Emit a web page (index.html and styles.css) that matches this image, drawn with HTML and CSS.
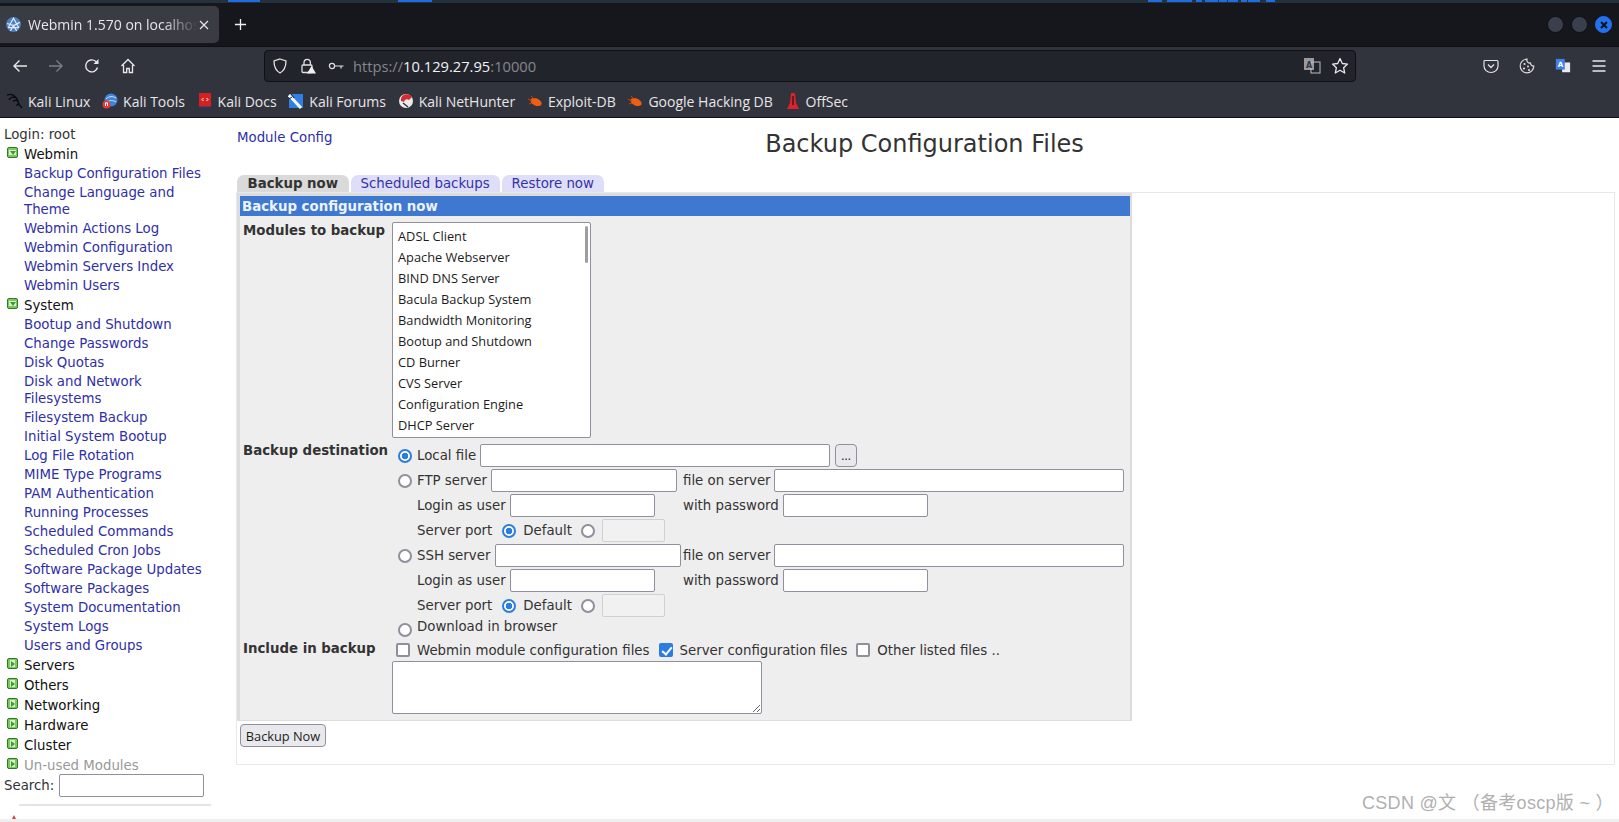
FILE: index.html
```html
<!DOCTYPE html>
<html lang="en">
<head>
<meta charset="utf-8">
<title>Webmin 1.570 on localhost</title>
<link rel="stylesheet" href="styles.css">
</head>
<body>
<div class="browser">
  <div class="loadstrip"><i class="b1"></i><i class="b2"></i><i class="b3"></i></div>
  <div class="tabbar">
    <div class="tab">
      <svg class="favicon" viewBox="0 0 16 16"><circle cx="8" cy="8" r="7" fill="#4a7fc4"/><path d="M3 11 8 2l5 9M2 7l6 2 6-3M5 14l3-5 3 5M3 11h10" fill="none" stroke="#e4ecf6" stroke-width="1.1"/></svg>
      <span class="tab-title">Webmin 1.570 on localhost</span>
      <svg class="tab-close" viewBox="0 0 12 12"><path d="M2 2l8 8M10 2l-8 8" stroke="#e6e6e8" stroke-width="1.2"/></svg>
    </div>
    <svg class="newtab" viewBox="0 0 14 14"><path d="M7 1v12M1 7h12" stroke="#f0f0f2" stroke-width="1.4"/></svg>
    <div class="winbtns"><i class="wb"></i><i class="wb"></i><i class="wb close"><svg viewBox="0 0 10 10"><path d="M2 2l6 6M8 2l-6 6" stroke="#10131a" stroke-width="2"/></svg></i></div>
  </div>
  <div class="navbar">
    <svg class="nav-ic" viewBox="0 0 16 16"><path d="M15 8H2M7.500 2.500 2 8l5.500 5.500" fill="none" stroke="#e8e8ea" stroke-width="1.400"/></svg>
    <svg class="nav-ic" viewBox="0 0 16 16"><path d="M1 8h13M8.500 2.500 14 8l-5.500 5.500" fill="none" stroke="#7c7e85" stroke-width="1.400"/></svg>
    <svg class="nav-ic" viewBox="0 0 16 16"><path d="M13.500 9.500A6 6 0 1 1 11.500 3.200L14 5" fill="none" stroke="#e8e8ea" stroke-width="1.400"/><path d="M14.500 1v5h-5z" fill="#e8e8ea"/></svg>
    <svg class="nav-ic" viewBox="0 0 16 16"><path d="M1.500 8 8 1.500 14.500 8M3.500 7v7.500h3.200v-4h2.600v4h3.200V7" fill="none" stroke="#e8e8ea" stroke-width="1.300"/></svg>
    <div class="urlbar">
      <svg class="url-ic" viewBox="0 0 16 16"><path d="M8 1 14 3c0 6-1.500 9.500-6 12C3.500 12.500 2 9 2 3z" fill="none" stroke="#e2e2e4" stroke-width="1.300"/></svg>
      <svg class="url-ic" viewBox="0 0 16 16"><path d="M4 7V4.500a3.200 3.200 0 0 1 6.400 0V7" fill="none" stroke="#e2e2e4" stroke-width="1.300"/><rect x="2" y="7" width="10" height="7.500" rx="1" fill="none" stroke="#e2e2e4" stroke-width="1.300"/><path d="M11.500 8 16 15.500H7z" fill="#f0f0f0"/></svg>
      <svg class="url-ic key" viewBox="0 0 16 16"><circle cx="4" cy="8" r="2.600" fill="none" stroke="#e2e2e4" stroke-width="1.200"/><path d="M6.600 8H15.500M13 8v2.500" fill="none" stroke="#e2e2e4" stroke-width="1.200"/></svg>
      <span class="url"><span class="dim">https://</span>10.129.27.95<span class="dim">:10000</span></span>
      <svg class="url-ic trans" viewBox="0 0 18 18"><rect x="1" y="1" width="10" height="12" fill="#9a9a9e"/><rect x="8" y="5" width="9" height="11" fill="none" stroke="#bdbdc0"/><text x="3" y="10.500" class="tr-a">A</text></svg>
      <svg class="url-ic star" viewBox="0 0 18 18"><path d="M9 1.500 11.300 6.500l5.200.6-3.900 3.600 1.100 5.300L9 13.300 4.300 16l1.100-5.300L1.500 7.100l5.200-.6z" fill="none" stroke="#e8e8ea" stroke-width="1.300" stroke-linejoin="round"/></svg>
    </div>
    <div class="nav-right">
      <svg class="nav-ic" viewBox="0 0 16 16"><path d="M2 2.500h12a1 1 0 0 1 1 1V8a7 6.500 0 0 1-14 0V3.500a1 1 0 0 1 1-1z" fill="none" stroke="#e2e2e4" stroke-width="1.200"/><path d="M5 6.500 8 9.500l3-3" fill="none" stroke="#e2e2e4" stroke-width="1.300"/></svg>
      <svg class="nav-ic" viewBox="0 0 16 16"><path d="M8 1.200A6.800 6.800 0 1 0 14.800 8 3 3 0 0 1 11.500 5 3 3 0 0 1 8 1.200z" fill="none" stroke="#dcdcde" stroke-width="1.200"/><circle cx="5.500" cy="6" r="1.100" fill="#dcdcde"/><circle cx="5" cy="10.500" r="1.100" fill="#dcdcde"/><circle cx="9" cy="8.500" r="1" fill="#dcdcde"/><circle cx="10" cy="12" r="1.100" fill="#dcdcde"/></svg>
      <svg class="nav-ic" viewBox="0 0 18 18"><rect x="8" y="5" width="9" height="11" fill="#e8eaf0"/><rect x="1" y="1" width="10" height="12" fill="#3f7fe8"/><text x="3" y="10.500" class="tr-a tr-w">A</text></svg>
      <svg class="nav-ic" viewBox="0 0 16 16"><path d="M1.500 3h13M1.500 8h13M1.500 13h13" stroke="#e8e8ea" stroke-width="1.400"/></svg>
    </div>
  </div>
  <div class="bookmarks">
    <a class="bm"><svg viewBox="0 0 16 16"><path d="M0 2c4-1.500 7 0 9 2.500 2 2.500 2.500 5 3 7l3 3.500M9 4.500C6 3.500 3 4.500 2 7M11 8c-2-1-4-1-5 .5M12 11c-1 0-2 .5-2 2" fill="none" stroke="#0b0b0d" stroke-width="1.400"/></svg>Kali Linux</a>
    <a class="bm"><svg viewBox="0 0 16 16"><circle cx="9" cy="7" r="6.500" fill="#3f84d8"/><path d="M4 6c3-3 7-3 10-1M5 9c3-2 6-2 9 0" stroke="#cfe3f8" fill="none"/><circle cx="4.500" cy="11.500" r="4" fill="#e8393a"/><path d="M3 10h3M3.500 10v3M5.500 10v3" stroke="#fff"/></svg>Kali Tools</a>
    <a class="bm"><svg viewBox="0 0 16 16"><rect x="2" y="0" width="12" height="14.500" fill="#d32222"/><rect x="2" y="13.500" width="12" height="2.500" fill="#2a3560"/><path d="M6.500 5 5 6.500 6.500 8M9.500 5 11 6.500 9.500 8" fill="none" stroke="#fff"/></svg>Kali Docs</a>
    <a class="bm"><svg viewBox="0 0 16 16"><rect x="1" y="1" width="14" height="14" fill="#2f80e0"/><path d="M1 2 13 15" stroke="#f4f6f8" stroke-width="3"/><path d="M3 1 6 5M1 6l3-2" stroke="#222" stroke-width="1"/></svg>Kali Forums</a>
    <a class="bm"><svg viewBox="0 0 16 16"><circle cx="8" cy="8" r="7" fill="#eceaea"/><path d="M3 8A6 6 0 0 1 14 4l-3 3A3 3 0 0 0 6 9z" fill="#d42a32"/><path d="M5 10l5 4" stroke="#333" stroke-width="1.500"/></svg>Kali NetHunter</a>
    <a class="bm"><svg viewBox="0 0 16 16"><ellipse cx="9" cy="9" rx="6" ry="3.500" fill="#ee5f13" transform="rotate(25 9 9)"/><path d="M1 6l4 2M4 3l3 3M2 11l3-1" stroke="#b8450c"/></svg>Exploit-DB</a>
    <a class="bm"><svg viewBox="0 0 16 16"><ellipse cx="9" cy="9" rx="6" ry="3.500" fill="#ee5f13" transform="rotate(25 9 9)"/><path d="M1 6l4 2M4 3l3 3M2 11l3-1" stroke="#b8450c"/></svg>Google Hacking DB</a>
    <a class="bm"><svg viewBox="0 0 16 16"><path d="M6 0h4L11 10l3 6H2L5 10z" fill="#d8242c"/><path d="M8 3v9" stroke="#5a0e10" stroke-width="1.500"/></svg>OffSec</a>
  </div>
</div>

<div class="page">
  <aside class="side">
    <div class="login">Login: root</div>
    <div class="cat"><i class="arrow open"></i>Webmin</div>
    <a class="lnk">Backup Configuration Files</a>
    <a class="lnk">Change Language and Theme</a>
    <a class="lnk">Webmin Actions Log</a>
    <a class="lnk">Webmin Configuration</a>
    <a class="lnk">Webmin Servers Index</a>
    <a class="lnk">Webmin Users</a>
    <div class="cat"><i class="arrow open"></i>System</div>
    <a class="lnk">Bootup and Shutdown</a>
    <a class="lnk">Change Passwords</a>
    <a class="lnk">Disk Quotas</a>
    <a class="lnk">Disk and Network Filesystems</a>
    <a class="lnk">Filesystem Backup</a>
    <a class="lnk">Initial System Bootup</a>
    <a class="lnk">Log File Rotation</a>
    <a class="lnk">MIME Type Programs</a>
    <a class="lnk">PAM Authentication</a>
    <a class="lnk">Running Processes</a>
    <a class="lnk">Scheduled Commands</a>
    <a class="lnk">Scheduled Cron Jobs</a>
    <a class="lnk">Software Package Updates</a>
    <a class="lnk">Software Packages</a>
    <a class="lnk">System Documentation</a>
    <a class="lnk">System Logs</a>
    <a class="lnk">Users and Groups</a>
    <div class="cat"><i class="arrow"></i>Servers</div>
    <div class="cat"><i class="arrow"></i>Others</div>
    <div class="cat"><i class="arrow"></i>Networking</div>
    <div class="cat"><i class="arrow"></i>Hardware</div>
    <div class="cat"><i class="arrow"></i>Cluster</div>
    <div class="cat unused"><i class="arrow"></i>Un-used Modules</div>
    <div class="search">Search: <input class="search-in" type="text"></div>
    <hr class="side-hr">
    <div class="info"><svg viewBox="0 0 12 12"><path d="M6 1 11 11H1z" fill="#e23b3b"/></svg><a class="lnk-in">View Module's Logs</a></div>
  </aside>

  <main class="main">
    <header class="head">
      <a class="modcfg">Module Config</a>
      <h1 class="title">Backup Configuration Files</h1>
      <span></span>
    </header>
    <nav class="tabs">
      <a class="t active">Backup now</a>
      <a class="t">Scheduled backups</a>
      <a class="t">Restore now</a>
    </nav>
    <section class="panel">
      <div class="tbl">
        <div class="tbl-head">Backup configuration now</div>
        <div class="tbl-body">
          <div class="lab l-mod">Modules to backup</div>
          <div class="val v-mod">
            <div class="listbox">
              <div class="opt">ADSL Client</div>
              <div class="opt">Apache Webserver</div>
              <div class="opt">BIND DNS Server</div>
              <div class="opt">Bacula Backup System</div>
              <div class="opt">Bandwidth Monitoring</div>
              <div class="opt">Bootup and Shutdown</div>
              <div class="opt">CD Burner</div>
              <div class="opt">CVS Server</div>
              <div class="opt">Configuration Engine</div>
              <div class="opt">DHCP Server</div>
              <i class="thumb"></i>
            </div>
          </div>

          <div class="lab l-dest">Backup destination</div>
          <div class="val v-dest">
            <div class="row"><input class="radio" type="radio" name="d" checked><span>Local file</span><input class="in w350" type="text"><button class="dots" type="button">...</button></div>
            <div class="row"><input class="radio" type="radio" name="d"><div class="col-a"><span>FTP server</span><input class="in w186" type="text"></div><span>file on server</span><input class="in w350 far" type="text"></div>
            <div class="row indent"><div class="col-a"><span>Login as user</span><input class="in w145" type="text"></div><span>with password</span><input class="in w145" type="password"></div>
            <div class="row indent"><span>Server port</span><input class="radio r-gap" type="radio" name="p1" checked><span>Default</span><input class="radio r-gap2" type="radio" name="p1"><input class="in w63" type="text" disabled></div>
            <div class="row"><input class="radio" type="radio" name="d"><div class="col-a"><span>SSH server</span><input class="in w186 ssh" type="text"></div><span>file on server</span><input class="in w350 far" type="text"></div>
            <div class="row indent"><div class="col-a"><span>Login as user</span><input class="in w145" type="text"></div><span>with password</span><input class="in w145" type="password"></div>
            <div class="row indent"><span>Server port</span><input class="radio r-gap" type="radio" name="p2" checked><span>Default</span><input class="radio r-gap2" type="radio" name="p2"><input class="in w63" type="text" disabled></div>
            <div class="row short"><input class="radio" type="radio" name="d"><span>Download in browser</span></div>
          </div>

          <div class="lab l-inc">Include in backup</div>
          <div class="val v-inc">
            <div class="checks">
              <input class="check" type="checkbox"><span>Webmin module configuration files</span>
              <input class="check" type="checkbox" checked><span>Server configuration files</span>
              <input class="check" type="checkbox"><span>Other listed files ..</span>
            </div>
            <textarea class="ta"></textarea>
          </div>
        </div>
      </div>
      <button class="backup" type="button">Backup Now</button>
    </section>
  </main>
</div>
<div class="strip"></div>
<div class="wm">CSDN @文 （备考oscp版 ~ ）</div>
</body>
</html>
```
FILE: styles.css
```css
* { box-sizing: border-box; }
html, body { margin: 0; height: 822px; overflow: hidden; background: #fff; }
body { display: flex; flex-direction: column; font-family: "DejaVu Sans", sans-serif; font-size: 13.33px; color: #333; position: relative; }

.browser { flex: none; height: 118px; display: flex; flex-direction: column; background: #32343d; border-bottom: 1px solid #0d0e11; font-family: "Open Sans", "Noto Sans", sans-serif; color: #e6e6e8; }
.loadstrip { flex: none; height: 3px; background: #24303c; display: flex; }
.loadstrip i { display: block; height: 2px; background: #1d6ee0; }
.b1 { width: 32px; margin-left: 228px; }
.b2 { width: 34px; margin-left: 138px; }
.loadstrip .b3 { width: 127px; margin-left: 716px; background: linear-gradient(90deg, #1d6ee0 0 14px, transparent 14px 19px, #1d6ee0 19px 44px, transparent 44px 48px, #1d6ee0 48px 54px, transparent 54px 57px, #1d6ee0 57px 70px, transparent 70px 71px, #1d6ee0 71px 79px, transparent 79px 80px, #1d6ee0 80px 90px, transparent 90px 93px, #1d6ee0 93px 99px, transparent 99px 100px, #1d6ee0 100px 112px, transparent 112px 118px, #1d6ee0 118px 127px); }

.tabbar { flex: none; height: 44px; background: #16171c; display: flex; align-items: center; border-bottom: 1px solid #0e0f13; }
.tab { width: 219px; height: 37px; background: #3a3c44; border-radius: 0 5px 5px 0; display: flex; align-items: center; padding-left: 5px; }
.favicon { width: 17px; height: 17px; flex: none; }
.tab-title { margin-left: 6px; font-size: 14px; white-space: nowrap; overflow: hidden; width: 170px; color: #e6e6e8; -webkit-mask-image: linear-gradient(90deg, #000 135px, transparent 170px); mask-image: linear-gradient(90deg, #000 135px, transparent 170px); }
.tab-close { width: 12px; height: 12px; flex: none; }
.newtab { width: 13px; height: 13px; margin-left: 15px; }
.winbtns { margin-left: auto; display: flex; gap: 7px; padding-right: 7px; }
.wb { display: flex; align-items: center; justify-content: center; width: 17px; height: 17px; border-radius: 50%; background: #3a3f4d; border: 1px solid #0f1014; }
.wb.close { background: #2272ee; border-color: #2272ee; }
.wb svg { width: 10px; height: 10px; }

.navbar { flex: none; height: 38px; display: flex; align-items: center; padding-left: 12px; }
.nav-ic { width: 16px; height: 16px; flex: none; margin-right: 20px; }
.navbar > .nav-ic:nth-child(4) { margin-right: 0; }
.urlbar { width: 1092px; height: 32px; margin-left: 128px; background: #22242b; border: 1px solid #0f1014; border-radius: 4px; display: flex; align-items: center; padding-left: 7px; flex: none; }
.url-ic { width: 16px; height: 16px; flex: none; margin-right: 12px; }
.url { font-size: 14.7px; color: #f2f2f4; margin-left: -3px; flex: 1; white-space: nowrap; }
.dim { color: #85878d; }
.trans { width: 18px; height: 18px; margin-right: 10px; }
.star { width: 18px; height: 18px; margin-right: 6px; }
.tr-a { font: bold 8px "DejaVu Sans", sans-serif; fill: #33353c; }
.tr-w { fill: #fff; }
.nav-right { margin-left: auto; display: flex; }
.nav-right .nav-ic:last-child { margin-right: 12px; }

.bookmarks { flex: 1; display: flex; align-items: center; padding-left: 7px; }
.bm { display: flex; align-items: center; font-size: 14px; color: #e6e6e8; margin-right: 11.7px; white-space: nowrap; }
.bm svg { width: 16px; height: 16px; margin-right: 5px; flex: none; }

.page { flex: 1; min-height: 0; display: flex; overflow: hidden; }
.side { flex: none; width: 236px; padding: 6px 0 0 4px; line-height: 17px; overflow: hidden; }
.login { height: 20px; padding-top: 2px; }
.cat { height: 20px; padding: 2px 0 0 20px; position: relative; color: #111; }
.cat.unused { color: #999; }
.arrow { position: absolute; left: 3px; top: 3px; width: 11px; height: 11px; background: #7cc85a; border: 1px solid #2f7a2a; border-radius: 2px; }
.arrow::before { content: ""; position: absolute; left: 2px; top: 1px; width: 5px; height: 7px; background: #d9f2cc; }
.arrow::after { content: ""; position: absolute; left: 3px; top: 2px; border-left: 4px solid #3f9a35; border-top: 3px solid transparent; border-bottom: 3px solid transparent; }
.arrow.open::before { left: 1px; top: 2px; width: 7px; height: 5px; }
.arrow.open::after { left: 2px; top: 3px; border-top: 4px solid #3f9a35; border-left: 3px solid transparent; border-right: 3px solid transparent; border-bottom: 0; }
.lnk { display: block; padding: 1px 31px 1px 20px; color: #2f2fa8; }
.search { height: 29px; margin-top: -1px; display: flex; align-items: flex-start; gap: 5px; line-height: 23px; }
.search-in { width: 145px; height: 23px; border: 1px solid #8f8f9d; border-radius: 2px; background: #fff; padding: 0; }
.side-hr { width: 192px; height: 2px; margin: 1px 0 0 15px; border: 0; background: #e4e4e4; }
.info { display: flex; align-items: flex-start; gap: 8px; padding: 11px 0 0 4px; }
.info svg { width: 12px; height: 12px; margin-top: -3px; }
.lnk-in { color: #2f2fa8; }

.main { flex: 1; min-width: 0; padding-right: 4px; }
.head { height: 57px; display: grid; grid-template-columns: 1fr auto 1fr; padding: 11px 3px 0 1px; }
.modcfg { color: #2f2fa8; line-height: 17px; }
.title { margin: 0; font-size: 24px; font-weight: 400; line-height: 30px; color: #333; }
.tabs { height: 17px; display: flex; gap: 2px; padding-left: 1px; }
.t { height: 17px; padding: 0 10px; border-radius: 7px 7px 0 0; background: #dedef8; color: #3333a8; line-height: 17px; }
.t.active { padding: 0 10.5px; background: #dadada; color: #333; font-weight: 700; }
.panel { height: 573px; border: 1px solid #e8e8e8; }
.tbl { width: 895px; height: 528px; background: #eee; border: 1px solid #ddd; border-top-width: 3px; border-left-width: 3px; border-right-width: 2px; }
.tbl-head { height: 20px; background: #3f78d0; color: #eef3fb; font-weight: 700; line-height: 22px; padding-left: 2px; }
.tbl-body { display: grid; grid-template-columns: 152px 1fr; }
.lab { font-weight: 700; color: #333; padding: 6px 0 0 3px; line-height: 17px; white-space: nowrap; }
.val { min-width: 0; }
.v-mod { padding-top: 6px; height: 227px; }
.listbox { width: 199px; height: 216px; background: #fff; border: 1px solid #8f8f9d; border-radius: 2px; padding: 3px 5px; position: relative; font-family: "Open Sans", "Noto Sans", sans-serif; font-size: 12.8px; color: #1c1c1c; }
.opt { height: 21px; line-height: 21px; white-space: nowrap; }
.thumb { position: absolute; right: 2px; top: 3px; width: 3px; height: 37px; background: #9e9e9e; border-radius: 2px; }
.l-dest { padding-top: 0; margin-top: -1px; }
.v-dest { display: flex; flex-direction: column; }
.row { height: 25px; display: flex; align-items: center; gap: 4px; padding-left: 6px; white-space: nowrap; }
.row.short { height: 19px; }
.row.short .radio { margin-top: 4px; }
.row.short span { margin-bottom: 2px; }
.row.indent { padding-left: 25px; }
.radio { appearance: none; -webkit-appearance: none; width: 14px; height: 14px; margin: 0 1px 0 0; border: 2px solid #8f8f9d; border-radius: 50%; background: #fff; flex: none; }
.radio:checked { border-color: #2b7de0; background: radial-gradient(circle, #2b7de0 0 3px, #fff 3.6px); }
.r-gap { margin: 0 3px 0 6px; }
.r-gap2 { margin: 0 3px 0 5px; }
.col-a { width: 262px; display: flex; align-items: center; gap: 4px; flex: none; }
.in { height: 23px; border: 1px solid #8f8f9d; border-radius: 2px; background: #fff; padding: 0; flex: none; }
.in:disabled { background: #f1f1f1; border-color: #d0d0d4; }
.far { margin-left: -1px; }
.ssh { margin-left: 1px; }
.w350 { width: 350px; }
.w186 { width: 186px; }
.w145 { width: 145px; }
.w63 { width: 63px; }
.dots { width: 22px; height: 23px; padding: 0; margin-left: 1px; border: 1px solid #8f8f9d; border-radius: 4px; background: #e9e9ed; font: 12px "Open Sans", sans-serif; color: #222; }
.l-inc { padding-top: 3px; }
.v-inc { padding-top: 1px; }
.checks { height: 23px; display: flex; align-items: center; padding-left: 4px; }
.checks span { padding-top: 2px; }
.check { appearance: none; -webkit-appearance: none; width: 14px; height: 14px; margin: 0 7px 0 9px; border: 2px solid #8f8f9d; border-radius: 2px; background: #fff; flex: none; position: relative; }
.check:first-child { margin-left: 0; }
.check:checked { border-color: #2b7de0; background: #2b7de0; }
.check:checked::after { content: ""; position: absolute; left: 3px; top: 0; width: 4px; height: 8px; border: solid #fff; border-width: 0 2px 2px 0; transform: rotate(40deg); }
.ta { display: block; width: 370px; height: 53px; border: 1px solid #8f8f9d; border-radius: 2px; background: #fff; padding: 0; }
.backup { display: block; width: 86px; height: 23px; margin: 3px 0 0 3px; padding: 0; border: 1px solid #8f8f9d; border-radius: 4px; background: #e9e9ed; font: 12.8px "Open Sans", sans-serif; color: #1c1c1c; }

.strip { flex: none; height: 3px; background: #efefef; }
.wm { position: absolute; left: 1362px; top: 791px; font-family: "Liberation Sans", "Noto Sans CJK SC", sans-serif; font-size: 18px; line-height: 24px; letter-spacing: 0.3px; color: #b0b0b0; white-space: nowrap; }
```
